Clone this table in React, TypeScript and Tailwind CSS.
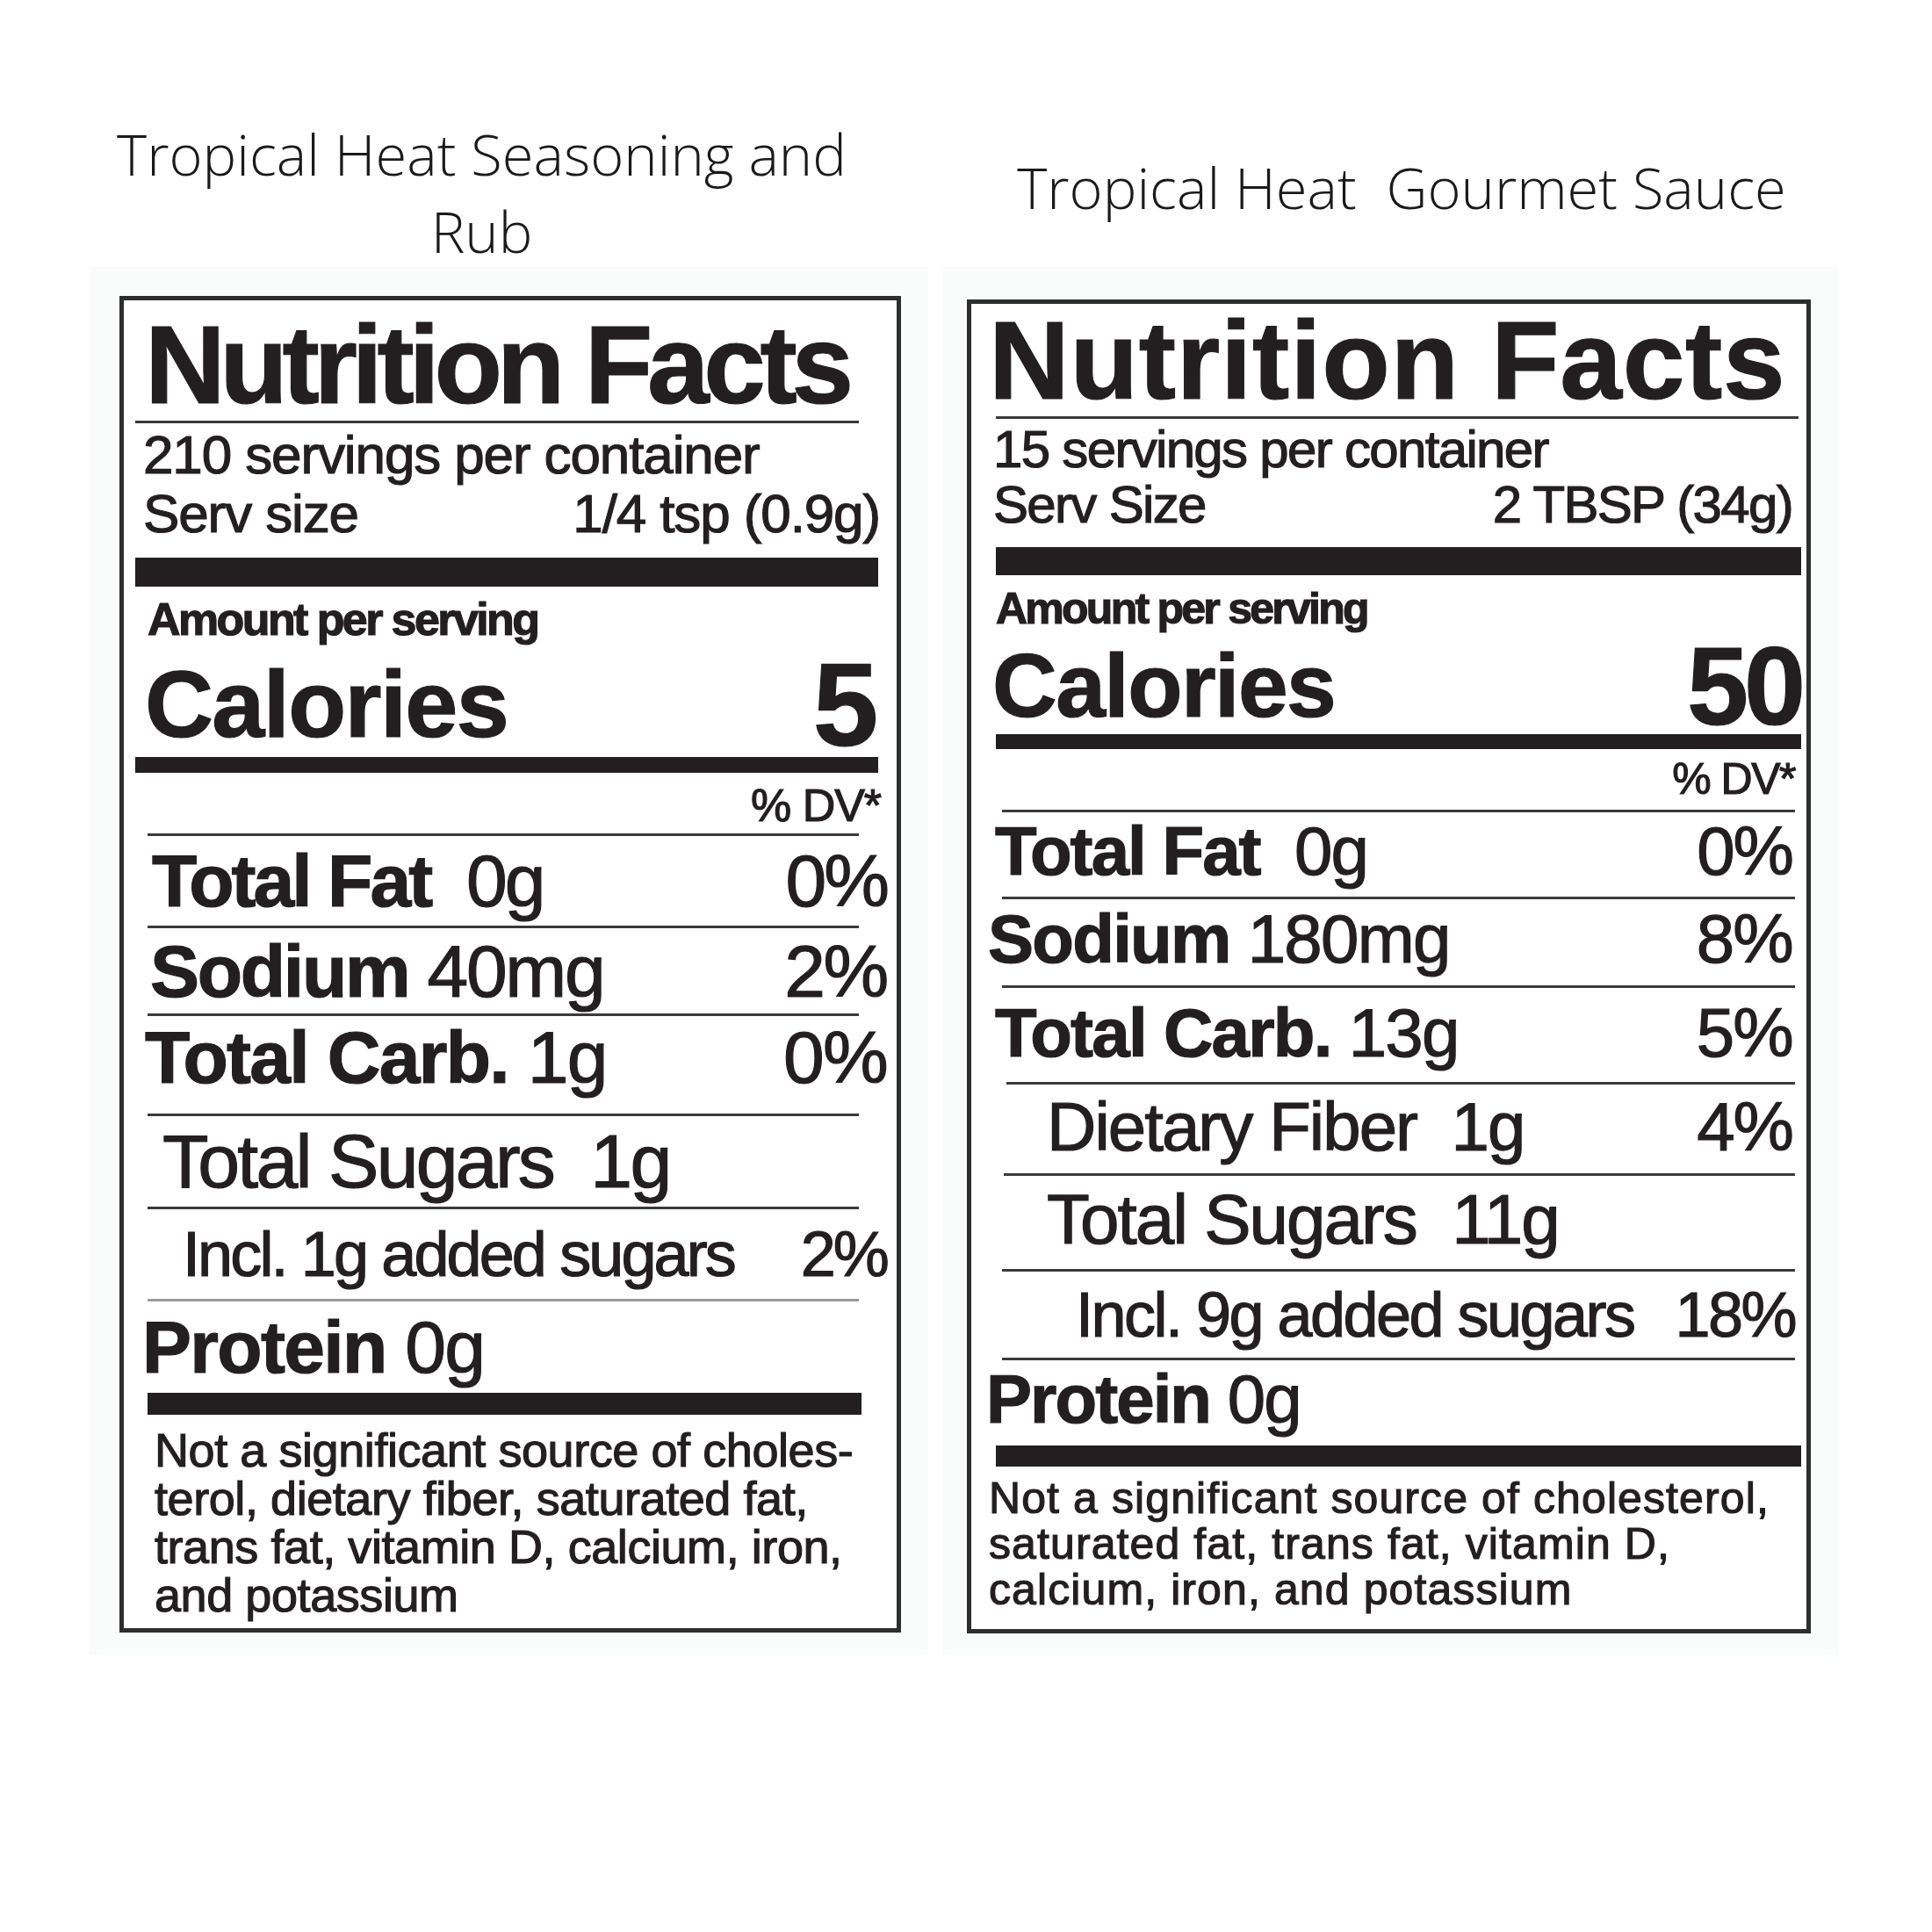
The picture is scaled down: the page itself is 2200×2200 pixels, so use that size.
import React from "react";

function Rule({ className }: { className: string }) {
  return <div className={className} />;
}

function LeftLabel() {
  return (
    <div className="w-[890px] h-[1522px] border-[5px] border-[#2e2e2e] bg-white text-[#231f20] flex flex-col [font-family:'Liberation_Sans',Arial,sans-serif] [-webkit-text-stroke:1.2px_#231f20]">
      <div className="mt-[10px] h-[127px] pl-[24px] flex items-center text-[127px] font-bold tracking-[-0.05em] whitespace-nowrap">
        Nutrition Facts
      </div>
      <Rule className="ml-[13px] w-[824px] h-[3px] bg-[#3a3a3a]" />
      <div className="h-[70px] pl-[22px] flex items-center text-[62px] tracking-[-0.018em] whitespace-nowrap">
        210 servings per container
      </div>
      <div className="h-[64px] pl-[22px] pr-[19px] flex items-center justify-between text-[62px] tracking-[-0.018em] whitespace-nowrap">
        <span>Serv size</span>
        <span>1/4 tsp (0.9g)</span>
      </div>
      <Rule className="mt-[19px] ml-[13px] w-[846px] h-[33px] bg-[#231f20]" />
      <div className="h-[74px] pl-[27px] flex items-center text-[52px] font-bold tracking-[-0.05em] whitespace-nowrap">
        Amount per serving
      </div>
      <div className="h-[120px] pl-[24px] pr-[26px] flex items-center justify-between font-bold whitespace-nowrap">
        <span className="text-[108px] tracking-[-0.015em]">Calories</span>
        <span className="text-[134px] tracking-[-0.04em]">5</span>
      </div>
      <Rule className="ml-[13px] w-[846px] h-[18px] bg-[#231f20]" />
      <div className="mt-[5px] h-[64px] pr-[18px] flex items-center justify-end text-[52px] tracking-[-0.02em] whitespace-nowrap">
        % DV*
      </div>
      <Rule className="ml-[27px] w-[810px] h-[3px] bg-[#3a3a3a]" />
      <div className="h-[102px] pl-[32px] pr-[11px] flex items-center justify-between text-[84px] tracking-[-0.035em] whitespace-nowrap">
        <span>
          <span className="font-bold">Total Fat</span>&nbsp;&nbsp;0g
        </span>
        <span>0%</span>
      </div>
      <Rule className="ml-[27px] w-[810px] h-[3px] bg-[#3a3a3a]" />
      <div className="h-[97px] pl-[30px] pr-[11px] flex items-center justify-between text-[84px] tracking-[-0.027em] whitespace-nowrap">
        <span>
          <span className="font-bold">Sodium</span> 40mg
        </span>
        <span>2%</span>
      </div>
      <Rule className="ml-[27px] w-[810px] h-[3px] bg-[#3a3a3a]" />
      <div className="h-[111px] pb-[18px] pl-[24px] pr-[11px] flex items-center justify-between text-[84px] tracking-[-0.02em] whitespace-nowrap">
        <span>
          <span className="font-bold">Total Carb.</span> 1g
        </span>
        <span>0%</span>
      </div>
      <Rule className="ml-[27px] w-[810px] h-[3px] bg-[#3a3a3a]" />
      <div className="h-[103px] pl-[44px] flex items-center text-[86px] tracking-[-0.032em] whitespace-pre">
        Total Sugars  1g
      </div>
      <Rule className="ml-[27px] w-[810px] h-[3px] bg-[#3a3a3a]" />
      <div className="h-[102px] pl-[67px] pr-[11px] flex items-center justify-between text-[72px] tracking-[-0.04em] whitespace-nowrap">
        <span>Incl. 1g added sugars</span>
        <span>2%</span>
      </div>
      <Rule className="ml-[27px] w-[810px] h-[3px] bg-[#9a9a9a]" />
      <div className="h-[104px] pl-[21px] flex items-center text-[84px] tracking-[-0.02em] whitespace-nowrap">
        <span>
          <span className="font-bold">Protein</span> 0g
        </span>
      </div>
      <Rule className="ml-[27px] w-[813px] h-[25px] bg-[#231f20]" />
      <div className="mt-[13px] pl-[35px] text-[54px] leading-[55px] tracking-[-0.008em] whitespace-nowrap">
        <div>Not a significant source of choles-</div>
        <div>terol, dietary fiber, saturated fat,</div>
        <div>trans fat, vitamin D, calcium, iron,</div>
        <div>and potassium</div>
      </div>
    </div>
  );
}

function RightLabel() {
  return (
    <div className="w-[961px] h-[1519px] border-[5px] border-[#2e2e2e] bg-white text-[#231f20] flex flex-col [font-family:'Liberation_Sans',Arial,sans-serif] [-webkit-text-stroke:1.2px_#231f20]">
      <div className="mt-[1px] h-[127px] pl-[20px] flex items-center text-[127px] font-bold tracking-[0.006em] whitespace-nowrap">
        Nutrition Facts
      </div>
      <Rule className="ml-[28px] w-[914px] h-[3px] bg-[#3a3a3a]" />
      <div className="h-[70px] pl-[25px] flex items-center text-[60px] tracking-[-0.028em] whitespace-nowrap">
        15 servings per container
      </div>
      <div className="h-[56px] pl-[25px] pr-[16px] flex items-center justify-between text-[60px] tracking-[-0.028em] whitespace-nowrap">
        <span>Serv Size</span>
        <span>2 TBSP (34g)</span>
      </div>
      <Rule className="mt-[20px] ml-[28px] w-[917px] h-[32px] bg-[#231f20]" />
      <div className="h-[76px] pl-[28px] flex items-center text-[50px] font-bold tracking-[-0.055em] whitespace-nowrap">
        Amount per serving
      </div>
      <div className="h-[100px] pl-[24px] pr-[6px] flex items-center justify-between font-bold whitespace-nowrap">
        <span className="text-[102px] tracking-[-0.015em]">Calories</span>
        <span className="text-[126px] tracking-[-0.04em]">50</span>
      </div>
      <Rule className="mt-[5px] ml-[28px] w-[917px] h-[17px] bg-[#231f20]" />
      <div className="h-[69px] pr-[13px] flex items-center justify-end text-[50px] tracking-[-0.03em] whitespace-nowrap">
        % DV*
      </div>
      <Rule className="ml-[35px] w-[903px] h-[3px] bg-[#3a3a3a]" />
      <div className="h-[96px] pb-[8px] pl-[27px] pr-[16px] flex items-center justify-between text-[78px] tracking-[-0.025em] whitespace-nowrap">
        <span>
          <span className="font-bold">Total Fat</span>&nbsp;&nbsp;0g
        </span>
        <span>0%</span>
      </div>
      <Rule className="ml-[35px] w-[903px] h-[3px] bg-[#3a3a3a]" />
      <div className="h-[98px] pb-[8px] pl-[19px] pr-[16px] flex items-center justify-between text-[78px] tracking-[-0.022em] whitespace-nowrap">
        <span>
          <span className="font-bold">Sodium</span> 180mg
        </span>
        <span>8%</span>
      </div>
      <Rule className="ml-[35px] w-[903px] h-[3px] bg-[#3a3a3a]" />
      <div className="h-[107px] pb-[4px] pl-[27px] pr-[16px] flex items-center justify-between text-[78px] tracking-[-0.022em] whitespace-nowrap">
        <span>
          <span className="font-bold">Total Carb.</span> 13g
        </span>
        <span>5%</span>
      </div>
      <Rule className="ml-[40px] w-[898px] h-[3px] bg-[#3a3a3a]" />
      <div className="h-[101px] pb-[4px] pl-[86px] pr-[16px] flex items-center justify-between text-[78px] tracking-[-0.025em] whitespace-pre">
        <span>Dietary Fiber  1g</span>
        <span>4%</span>
      </div>
      <Rule className="ml-[37px] w-[901px] h-[3px] bg-[#3a3a3a]" />
      <div className="h-[106px] pb-[6px] pl-[86px] flex items-center text-[80px] tracking-[-0.025em] whitespace-pre">
        Total Sugars  11g
      </div>
      <Rule className="ml-[35px] w-[903px] h-[3px] bg-[#3a3a3a]" />
      <div className="h-[98px] pl-[119px] pr-[13px] flex items-center justify-between text-[72px] tracking-[-0.035em] whitespace-nowrap">
        <span>Incl. 9g added sugars</span>
        <span>18%</span>
      </div>
      <Rule className="ml-[35px] w-[903px] h-[3px] bg-[#3a3a3a]" />
      <div className="h-[97px] pb-[8px] pl-[17px] flex items-center text-[78px] tracking-[-0.025em] whitespace-nowrap">
        <span>
          <span className="font-bold">Protein</span> 0g
        </span>
      </div>
      <Rule className="ml-[28px] w-[917px] h-[24px] bg-[#231f20]" />
      <div className="mt-[10px] pl-[20px] text-[50px] leading-[52px] tracking-[0.022em] whitespace-nowrap">
        <div>Not a significant source of cholesterol,</div>
        <div>saturated fat, trans fat, vitamin D,</div>
        <div>calcium, iron, and potassium</div>
      </div>
    </div>
  );
}

export default function App() {
  return (
    <div className="w-[2200px] h-[2200px] bg-white flex pl-[102px] gap-[16px]">
      <div className="w-[955px] flex flex-col">
        <div className="h-[304px] pt-[131px] pr-[62px] text-center text-[65px] leading-[88px] font-light text-[#1a1a1a] whitespace-nowrap [font-family:'Open_Sans',sans-serif]">
          Tropical Heat Seasoning and
          <br />
          Rub
        </div>
        <div className="h-[1581px] bg-[#fafbfb] pt-[33px] pl-[34px]">
          <LeftLabel />
        </div>
      </div>
      <div className="w-[1020px] flex flex-col">
        <div className="h-[304px] pt-[169px] pl-[26px] text-center text-[65px] leading-[88px] font-light text-[#1a1a1a] whitespace-pre [font-family:'Open_Sans',sans-serif]">
          Tropical Heat  Gourmet Sauce
        </div>
        <div className="h-[1581px] bg-[#fafbfb] pt-[37px] pl-[28px]">
          <RightLabel />
        </div>
      </div>
    </div>
  );
}
